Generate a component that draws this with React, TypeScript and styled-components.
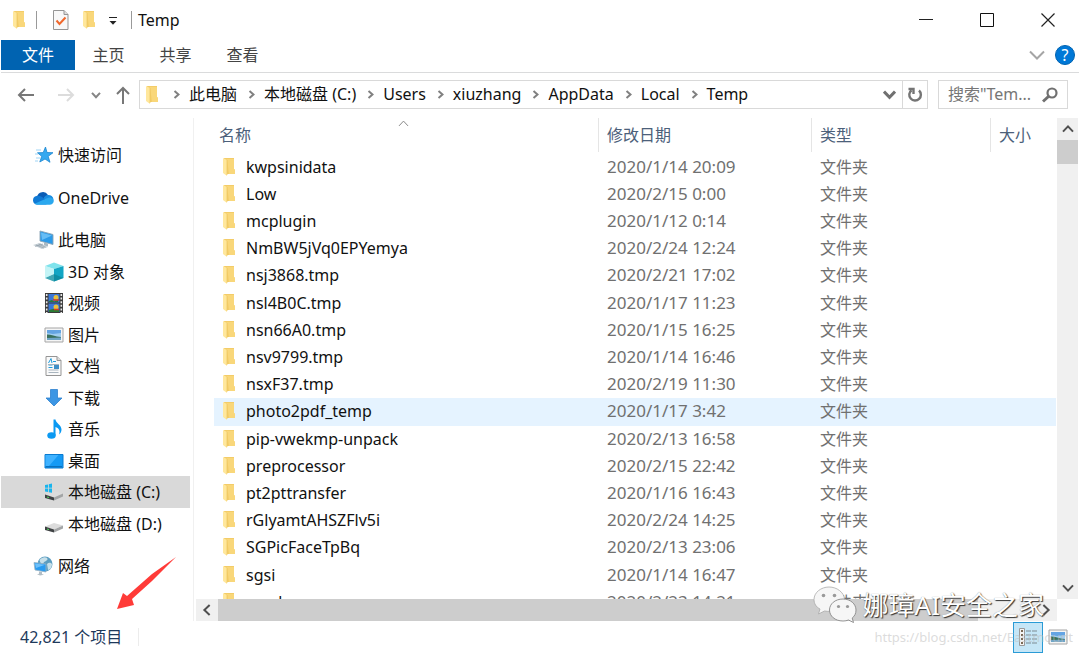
import React from "react";
import styled, { createGlobalStyle, css } from "styled-components";

const Global = createGlobalStyle`
  *, *::before, *::after { box-sizing: border-box; }
  body {
    margin: 0;
    background: #fff;
    color: #111;
    font: 16px/24px "Noto Sans", "Noto Sans CJK SC", sans-serif;
  }
  button, input { font: inherit; color: inherit; margin: 0; }
  button { border: 0; padding: 0; background: none; cursor: default; }
  a { color: inherit; text-decoration: none; }
  ul, ol { list-style: none; margin: 0; padding: 0; }
  svg { display: block; flex: none; }
  h1 { margin: 0; font-size: 16px; font-weight: 400; }
`;

const Window = styled.div`
  position: relative;
  display: flex;
  flex-direction: column;
  height: 100vh;
  padding: 0 1px;
  overflow: hidden;
`;

/* Title bar */
const TitleBar = styled.header`
  display: flex;
  align-items: center;
  height: 40px;
  flex: none;
  padding-left: 11px;
`;
const Divider = styled.span<{ $left: number; $right: number }>`
  width: 1px;
  height: 18px;
  margin: 0 ${(p) => p.$right}px 0 ${(p) => p.$left}px;
  background: #9a9a9a;
`;
const QuickTools = styled.div`
  display: flex;
  align-items: center;
  gap: 12px;
`;
const Caption = styled.div`
  display: flex;
  margin-left: auto;
  padding-right: 1px;
`;
const CaptionButton = styled.button`
  display: grid;
  place-items: center;
  width: 61px;
  height: 40px;
`;

/* Ribbon */
const Ribbon = styled.nav`
  display: flex;
  align-items: center;
  height: 33px;
  flex: none;
  padding-bottom: 2px;
  border-bottom: 1px solid #dadbdc;
`;
const Tab = styled.button<{ $primary?: boolean }>`
  width: 67px;
  height: 30px;
  color: #444;
  ${(p) =>
    p.$primary &&
    css`
      width: 74px;
      background: #0063b1;
      color: #fff;
    `}
`;
const RibbonEnd = styled.div`
  display: flex;
  align-items: center;
  gap: 10px;
  margin-left: auto;
  padding-right: 4px;
`;
const HelpButton = styled.button`
  width: 20px;
  height: 20px;
  border-radius: 50%;
  background: #0078d7;
  border: 1px solid #0063b1;
  color: #fff;
  font-size: 16px;
  line-height: 18px;
`;

/* Address row */
const AddressRow = styled.div`
  display: flex;
  align-items: center;
  height: 45px;
  flex: none;
  padding: 0 11px 2px 16px;
`;
const NavButtons = styled.div`
  display: flex;
  align-items: center;
  width: 122px;
  flex: none;
`;
const NavButton = styled.button<{ $width: number }>`
  display: flex;
  width: ${(p) => p.$width}px;
`;
const AddressBox = styled.div`
  display: flex;
  align-items: center;
  flex: 1;
  min-width: 0;
  height: 29px;
  border: 1px solid #d9d9d9;
  padding-left: 5px;
`;
const Crumbs = styled.ol`
  display: flex;
  flex: 1;
  min-width: 0;
  overflow: hidden;
  padding: 0 0 2px 3px;
`;
const Crumb = styled.li`
  display: flex;
  align-items: center;
  white-space: nowrap;
  flex: none;
  svg { margin: 2px 8px 0 10px; }
`;
const BoxButton = styled.button<{ $divided?: boolean }>`
  display: grid;
  place-items: center;
  width: 25px;
  height: 27px;
  border-left: ${(p) => (p.$divided ? "1px solid #d9d9d9" : "0")};
`;
const SearchBox = styled.label`
  display: flex;
  align-items: center;
  width: 130px;
  height: 29px;
  margin-left: 10px;
  padding: 0 9px;
  border: 1px solid #d9d9d9;
`;
const SearchInput = styled.input`
  flex: 1;
  width: 0;
  border: 0;
  padding: 0 0 2px;
  outline: 0;
  background: none;
  &::placeholder { color: #767676; opacity: 1; }
`;

/* Body */
const Body = styled.div`
  display: flex;
  flex: 1;
  min-height: 0;
`;
const Sidebar = styled.nav`
  width: 193px;
  flex: none;
  padding: 21px 3px 0 0;
  border-right: 1px solid #f0f0f0;
`;
const Place = styled.li<{ $group?: boolean; $selected?: boolean }>`
  height: 31px;
  background: ${(p) => (p.$selected ? "#d9d9d9" : "transparent")};
  &:nth-child(odd) { height: 32px; }
  &:not(:first-child) { margin-top: ${(p) => (p.$group ? "11px" : "0")}; }
  a {
    display: flex;
    align-items: center;
    height: 100%;
    gap: 4px;
    padding-left: ${(p) => (p.$group ? "31px" : "43px")};
  }
`;
const Pane = styled.main`
  display: flex;
  flex-direction: column;
  flex: 1;
  min-width: 0;
  padding: 0 1px 0 2px;
`;
const PaneTop = styled.div`
  display: flex;
  flex: 1;
  min-height: 0;
`;
const Listing = styled.div`
  flex: 1;
  min-width: 0;
  overflow: hidden;
  padding: 0 1px 0 18px;
`;
const Files = styled.table`
  width: 100%;
  table-layout: fixed;
  border-collapse: collapse;
`;
const Heading = styled.th<{ $width?: number; $first?: boolean }>`
  height: 36px;
  width: ${(p) => (p.$width ? p.$width + "px" : "auto")};
  padding: 0 0 2px ${(p) => (p.$first ? 5 : 9)}px;
  font-weight: 400;
  text-align: left;
  color: #4c607a;
  background: ${(p) =>
    p.$first ? "none" : "linear-gradient(#e5e5e5, #e5e5e5) 0 0 / 1px 34px no-repeat"};
`;
const HeadingInner = styled.span`
  display: flex;
  align-items: center;
  height: 34px;
`;
const SortMark = styled.span`
  align-self: flex-start;
  margin: 0 auto;
  padding-right: 42px;
`;
const FileRow = styled.tr<{ $hover?: boolean }>`
  height: 27px;
  background: ${(p) => (p.$hover ? "#e5f3ff" : "transparent")};
  &:nth-child(5n) { height: 28px; }
`;
const Cell = styled.td<{ $digits?: boolean }>`
  padding: 0 0 2px 9px;
  color: #707070;
  font-size: ${(p) => (p.$digits ? 17 : 16)}px;
  white-space: nowrap;
`;
const NameCell = styled(Cell)`
  padding-left: 8px;
  color: #111;
`;
const FileName = styled.span`
  display: flex;
  align-items: center;
  gap: 10px;
`;

/* Scroll bars */
const VBar = styled.div`
  display: flex;
  flex-direction: column;
  width: 21px;
  flex: none;
  background: #f0f0f0;
`;
const HBar = styled.div`
  display: flex;
  height: 22px;
  flex: none;
  margin-right: 21px;
  background: #f0f0f0;
`;
const ScrollButton = styled.button`
  display: grid;
  place-items: center;
  width: 22px;
  height: 22px;
  flex: none;
`;
const Track = styled.div<{ $vertical?: boolean }>`
  flex: 1;
  display: flex;
  flex-direction: ${(p) => (p.$vertical ? "column" : "row")};
`;
const Thumb = styled.div<{ $vertical?: boolean }>`
  background: #cdcdcd;
  ${(p) => (p.$vertical ? "height: 24px;" : "width: 93%;")}
`;

/* Status bar */
const StatusBar = styled.footer`
  display: flex;
  align-items: center;
  height: 32px;
  flex: none;
  padding: 0 6px 0 19px;
  color: #1e395b;
`;
const Count = styled.span`
  padding-right: 16px;
  border-right: 1px solid #ececec;
  line-height: 18px;
`;
const Views = styled.div`
  display: flex;
  align-items: center;
  margin-left: auto;
`;
const ViewButton = styled.button<{ $active?: boolean }>`
  display: grid;
  place-items: center;
  width: 30px;
  height: 31px;
  border: 1px solid ${(p) => (p.$active ? "#2a9bd6" : "transparent")};
  background: ${(p) => (p.$active ? "#c5e6f7" : "none")};
`;

/* Overlays */
const RedArrow = styled.svg`
  position: absolute;
  left: 116px;
  bottom: 42px;
`;
const Signature = styled.div`
  position: absolute;
  right: 36px;
  bottom: 28px;
  display: flex;
  align-items: center;
  gap: 6px;
  color: #fff;
  font-size: 26px;
  line-height: 40px;
  text-shadow: 1px 1px 1px #333, 0 0 1px #888;
  pointer-events: none;
`;
const Source = styled.div`
  position: absolute;
  right: 7px;
  bottom: 4px;
  color: rgba(190, 190, 190, 0.55);
  font-size: 13px;
  pointer-events: none;
`;

const Folder = () => (
  <svg width="14" height="20" viewBox="0 0 14 20">
    <path d="M2 1h10v11l1 1v4H3z" fill="#f3cc68" />
    <path d="M5 2h7v10l1 1v4H7z" fill="#f9d77a" />
    <path d="M1 1l4 2v16l-4-3z" fill="#ffe79c" />
    <path d="M5 3v15" stroke="#edc65f" strokeWidth=".7" />
  </svg>
);

const Chevron = ({
  dir,
  size = 10,
  color = "#707070",
  weight = 2,
}: {
  dir: "up" | "down" | "left" | "right";
  size?: number;
  color?: string;
  weight?: number;
}) => {
  const turn = { down: 0, left: 90, up: 180, right: 270 }[dir];
  return (
    <svg width={size} height={size} viewBox={`0 0 ${size} ${size}`}>
      <path
        d={`M1 ${size * 0.28}L${size / 2} ${size * 0.72}L${size - 1} ${size * 0.28}`}
        transform={`rotate(${turn} ${size / 2} ${size / 2})`}
        fill="none"
        stroke={color}
        strokeWidth={weight}
      />
    </svg>
  );
};

const Arrow = ({ d, color }: { d: string; color: string }) => (
  <svg width="18" height="18" viewBox="0 0 18 18" fill="none" stroke={color} strokeWidth="2">
    <path d={d} />
  </svg>
);

const Star = () => (
  <svg width="22" height="20" viewBox="0 0 22 20">
    <path d="M13.500 2l1.500 5.500 6 .2-4.800 3.600 1.800 6-5-3.300-5.200 3 1.900-5.700-4.200-3.500 5.700-.2z" fill="#35a9f0" stroke="#1c86d1" strokeWidth=".8" />
    <path d="M4 5h5M3 9h3M4 13h4M3 16h3" stroke="#9fd4f5" strokeWidth="1" />
  </svg>
);
const Cloud = () => (
  <svg width="22" height="20" viewBox="0 0 22 20">
    <path d="M5 9a6 6 0 0 1 11-2l-4 7z" fill="#0a5cb5" />
    <path d="M5 16.500a4.300 4.300 0 0 1-.5-8.500c3-.6 5 .6 8 3l2 5.500z" fill="#1079d4" />
    <path d="M16 7a5 5 0 0 1 5.500 4.500l-5 1-5-2c1-2.200 2.500-3.300 4.500-3.500z" fill="#1a8ce0" />
    <path d="M5 16.700h13a3.900 3.900 0 0 0 3.500-5.300c-1.500-1.800-4-2.400-6.500-1.200L2.500 15.700z" fill="#2ba8ee" />
  </svg>
);
const Computer = () => (
  <svg width="22" height="20" viewBox="0 0 22 20">
    <path d="M8 1l13 3.500v10L8 11z" fill="#2c9ae8" stroke="#8aa4b5" strokeWidth=".9" />
    <path d="M9 2.500l11 3-10 4.500z" fill="#67bdf5" />
    <path d="M12 12.500l4 1v3l-4-1z" fill="#a9b8c2" />
    <path d="M1 15l7-2 8 4-6 2z" fill="#c5cfd6" />
    <path d="M4 15l8 3M6.500 14l7 3.200M3 16.500l8-2.500" stroke="#8b99a3" strokeWidth=".6" />
  </svg>
);
const Cube = () => (
  <svg width="20" height="20" viewBox="0 0 20 20">
    <path d="M10 0.500l9.500 3.500-9.500 3L1 4z" fill="#7fe3ec" />
    <path d="M1 4l9 3v12.500L1 16z" fill="#a6edf2" />
    <path d="M10 7l9.500-3v12L10 19.500z" fill="#12a5c4" />
    <path d="M1 16l9-4 9.500 4-9.500 3.500z" fill="#0b8193" opacity=".65" />
    <path d="M1 4l9 3v5L1 16z" fill="#d1f7f8" opacity=".7" />
  </svg>
);
const Film = () => (
  <svg width="20" height="20" viewBox="0 0 20 20">
    <path d="M1 0h18v20H1z" fill="#3b3b3b" />
    <path d="M4.500 1h11v8.500h-11zM4.500 10.500h11V19h-11z" fill="#3a76d8" />
    <path d="M5 8l3-1 2 1.500 4-1.500v2H5zM5 17l4-1 6 1v2H5z" fill="#2a7b35" />
    <circle cx="12" cy="4.500" r="2.500" fill="#eac13a" />
    <circle cx="12" cy="14" r="2.500" fill="#eac13a" />
    <path d="M9 7h6M10 16.500h5" stroke="#d33a2c" strokeWidth="1.500" />
    <path d="M2.700 1v19M17.300 1v19" stroke="#e8e8e8" strokeWidth="1.600" strokeDasharray="2 1.600" />
  </svg>
);
const Picture = () => (
  <svg width="20" height="20" viewBox="0 0 20 20">
    <path d="M1 3h18v14H1z" fill="#f5f5f5" stroke="#a5a5a5" />
    <path d="M3 5h14v10H3z" fill="#9fcdf1" />
    <path d="M3 5h14v3l-8 1-6-1z" fill="#4b93dd" opacity=".7" />
    <path d="M3 9.500c4 0 8 2 14 2.500V15H3z" fill="#39705c" />
    <path d="M3 13l14-.5V15H3z" fill="#6fa5c7" />
  </svg>
);
const Doc = () => (
  <svg width="20" height="20" viewBox="0 0 20 20">
    <path d="M2 .5h11l4 4v15H2z" fill="#fafafa" stroke="#959595" />
    <path d="M13 .5v4h4" fill="#ddd" stroke="#959595" />
    <path d="M4.500 7l2.500-4.500L8 7M9 5.500h3M4.500 9h4M4.500 11.500h4" stroke="#1f9bdc" fill="none" />
    <path d="M4.500 14h10M4.500 16.500h10M4 8.500h11" stroke="#a9b5bf" />
    <path d="M10 9h5v4h-5z" fill="#3f8fc7" />
  </svg>
);
const Download = () => (
  <svg width="20" height="20" viewBox="0 0 20 20">
    <path d="M6.500 1.500h7V10h4.500l-8 8-8-8h4.500z" fill="#3c96e4" stroke="#2d82cf" strokeWidth=".8" />
  </svg>
);
const Music = () => (
  <svg width="20" height="20" viewBox="0 0 20 20">
    <ellipse cx="7.500" cy="16.500" rx="4.200" ry="3.200" fill="#0a99f2" />
    <path d="M9.500 0.500h2c.3 3.500 6 5.500 6 10 0 2-1 4-2.500 5 1.500-4-.3-6.500-3.500-7.500v8.500h-2z" fill="#0a99f2" />
  </svg>
);
const Desktop = () => (
  <svg width="20" height="20" viewBox="0 0 20 20">
    <path d="M1 3.500h18v13.500H1z" fill="#159af5" stroke="#0a7bd0" />
    <path d="M1.500 4h13L5 15H1.500z" fill="#3fb2ff" />
    <path d="M2 15.700h16" stroke="#0868b0" />
  </svg>
);
const Disk = ({ system }: { system?: boolean }) => (
  <svg width="20" height="20" viewBox="0 0 20 20">
    <path d="M1 12.500L10 9l9 2.500-9 4z" fill="#dcdcdc" />
    <path d="M1 12.500l9 3V18.500l-9-2.500z" fill="#3f4244" />
    <path d="M10 15.500l9-4v3l-9 4z" fill="#a3a5a6" />
    <path d="M3 15l2 .6" stroke="#4fd25c" strokeWidth="1" />
    {system && (
      <path d="M1 3l3-.6v3.400H1zM4.800 2.200L8 1.600v4.200H4.800zM1 6.600h3V10l-3-.5zM4.800 6.600H8v4.100l-3.200-.5z" fill="#19b5ee" />
    )}
  </svg>
);
const Network = () => (
  <svg width="22" height="20" viewBox="0 0 22 20">
    <circle cx="13" cy="8" r="7.500" fill="#5b9dc0" />
    <path d="M7.500 4c3-4 8-3 8-1s-3 2-4 4-3 1-4-3zM15 8c2-2 4-1 5 0 0 3-2 6-4 6z" fill="#c6dfe9" />
    <path d="M2 6.500l12 1.500v8L3 14z" fill="#299bf0" stroke="#9cb2c0" strokeWidth=".8" />
    <path d="M3 7.500l10 1.300-9 3.200z" fill="#6cc0fa" />
    <path d="M7 15.500l3 .5v2l2 .8-4 .7-3-1.200 2-.6z" fill="#b2bec6" />
  </svg>
);

const places: { label: string; icon: React.ReactNode; group?: boolean; selected?: boolean }[] = [
  { label: "快速访问", icon: <Star />, group: true },
  { label: "OneDrive", icon: <Cloud />, group: true },
  { label: "此电脑", icon: <Computer />, group: true },
  { label: "3D 对象", icon: <Cube /> },
  { label: "视频", icon: <Film /> },
  { label: "图片", icon: <Picture /> },
  { label: "文档", icon: <Doc /> },
  { label: "下载", icon: <Download /> },
  { label: "音乐", icon: <Music /> },
  { label: "桌面", icon: <Desktop /> },
  { label: "本地磁盘 (C:)", icon: <Disk system />, selected: true },
  { label: "本地磁盘 (D:)", icon: <Disk /> },
  { label: "网络", icon: <Network />, group: true },
];

const files = [
  ["kwpsinidata", "2020/1/14 20:09"],
  ["Low", "2020/2/15 0:00"],
  ["mcplugin", "2020/1/12 0:14"],
  ["NmBW5jVq0EPYemya", "2020/2/24 12:24"],
  ["nsj3868.tmp", "2020/2/21 17:02"],
  ["nsl4B0C.tmp", "2020/1/17 11:23"],
  ["nsn66A0.tmp", "2020/1/15 16:25"],
  ["nsv9799.tmp", "2020/1/14 16:46"],
  ["nsxF37.tmp", "2020/2/19 11:30"],
  ["photo2pdf_temp", "2020/1/17 3:42"],
  ["pip-vwekmp-unpack", "2020/2/13 16:58"],
  ["preprocessor", "2020/2/15 22:42"],
  ["pt2pttransfer", "2020/1/16 16:43"],
  ["rGlyamtAHSZFlv5i", "2020/2/24 14:25"],
  ["SGPicFaceTpBq", "2020/2/13 23:06"],
  ["sgsi", "2020/1/14 16:47"],
  ["send", "2020/2/23 14:21"],
];

const crumbs = ["此电脑", "本地磁盘 (C:)", "Users", "xiuzhang", "AppData", "Local", "Temp"];

export default function App() {
  return (
    <Window>
      <Global />
      <TitleBar>
        <Folder />
        <Divider $left={10} $right={15} />
        <QuickTools>
          <svg width="18" height="20" viewBox="0 0 18 20">
            <path d="M1.500.5h10.500l4 4v15h-14.500z" fill="#f8f8f8" stroke="#959595" />
            <path d="M12 .5v4h4" fill="#ddd" stroke="#959595" />
            <path d="M4.500 10.500l3 3.500 6-6.500" fill="none" stroke="#f0682c" strokeWidth="2" />
          </svg>
          <Folder />
          <svg width="10" height="10" viewBox="0 0 10 10">
            <path d="M1 2.500h8" stroke="#222" />
            <path d="M1.500 6h7L5 9.800z" fill="#222" />
          </svg>
        </QuickTools>
        <Divider $left={13} $right={6} />
        <h1>Temp</h1>
        <Caption>
          <CaptionButton aria-label="最小化">
            <svg width="14" height="14" viewBox="0 0 14 14">
              <path d="M0 6.500h14" stroke="#222" />
            </svg>
          </CaptionButton>
          <CaptionButton aria-label="最大化">
            <svg width="14" height="14" viewBox="0 0 14 14">
              <path d="M.5.5h13v13H.5z" fill="none" stroke="#111" />
            </svg>
          </CaptionButton>
          <CaptionButton aria-label="关闭">
            <svg width="14" height="14" viewBox="0 0 14 14">
              <path d="M.5.5l13 13M13.500.5l-13 13" stroke="#222" strokeWidth="1.200" />
            </svg>
          </CaptionButton>
        </Caption>
      </TitleBar>

      <Ribbon>
        <Tab $primary>文件</Tab>
        <Tab>主页</Tab>
        <Tab>共享</Tab>
        <Tab>查看</Tab>
        <RibbonEnd>
          <Chevron dir="down" size={16} color="#a5a5a5" weight={2} />
          <HelpButton aria-label="帮助">?</HelpButton>
        </RibbonEnd>
      </Ribbon>

      <AddressRow>
        <NavButtons>
          <NavButton $width={40} aria-label="后退">
            <Arrow d="M17 9H2M8 3L2 9l6 6" color="#777" />
          </NavButton>
          <NavButton $width={34} aria-label="前进">
            <Arrow d="M1 9h15M10 3l6 6-6 6" color="#dcdcdc" />
          </NavButton>
          <NavButton $width={23} aria-label="最近位置">
            <Chevron dir="down" size={10} color="#858585" />
          </NavButton>
          <NavButton $width={25} aria-label="向上">
            <Arrow d="M9 18V2M3 8l6-6 6 6" color="#777" />
          </NavButton>
        </NavButtons>
        <AddressBox>
          <Folder />
          <Crumbs>
            {crumbs.map((c) => (
              <Crumb key={c}>
                <Chevron dir="right" size={9} color="#808080" weight={2} />
                <button>{c}</button>
              </Crumb>
            ))}
          </Crumbs>
          <BoxButton aria-label="以前的位置">
            <Chevron dir="down" size={13} weight={3} />
          </BoxButton>
          <BoxButton $divided aria-label="刷新">
            <svg width="16" height="16" viewBox="0 0 16 16" fill="none" stroke="#757575" strokeWidth="2.400">
              <path d="M12 3.500A5.800 5.800 0 1 1 4.500 3.200" />
              <path d="M1.500 2h5v5" />
            </svg>
          </BoxButton>
        </AddressBox>
        <SearchBox>
          <SearchInput aria-label="搜索" placeholder={'搜索"Tem...'} />
          <svg width="16" height="16" viewBox="0 0 16 16" fill="none" stroke="#707070">
            <circle cx="10" cy="6" r="4.500" strokeWidth="2.200" />
            <path d="M7 9l-6 5.500" strokeWidth="3" />
          </svg>
        </SearchBox>
      </AddressRow>

      <Body>
        <Sidebar aria-label="导航窗格">
          <ul>
            {places.map((p) => (
              <Place key={p.label} $group={p.group} $selected={p.selected}>
                <a href="#">
                  {p.icon}
                  {p.label}
                </a>
              </Place>
            ))}
          </ul>
        </Sidebar>
        <Pane>
          <PaneTop>
            <Listing>
              <Files>
                <thead>
                  <tr>
                    <Heading $first>
                      <HeadingInner>
                        名称
                        <SortMark>
                          <Chevron dir="up" size={11} color="#888" weight={1} />
                        </SortMark>
                      </HeadingInner>
                    </Heading>
                    <Heading $width={213}>修改日期</Heading>
                    <Heading $width={179}>类型</Heading>
                    <Heading $width={66}>大小</Heading>
                  </tr>
                </thead>
                <tbody>
                  {files.map(([name, date]) => (
                    <FileRow key={name} $hover={name === "photo2pdf_temp"}>
                      <NameCell>
                        <FileName>
                          <Folder />
                          {name}
                        </FileName>
                      </NameCell>
                      <Cell $digits>{date}</Cell>
                      <Cell>文件夹</Cell>
                      <Cell />
                    </FileRow>
                  ))}
                </tbody>
              </Files>
            </Listing>
            <VBar>
              <ScrollButton aria-label="向上滚动">
                <Chevron dir="up" size={12} color="#505050" weight={2} />
              </ScrollButton>
              <Track $vertical>
                <Thumb $vertical />
              </Track>
              <ScrollButton aria-label="向下滚动">
                <Chevron dir="down" size={12} color="#505050" weight={2} />
              </ScrollButton>
            </VBar>
          </PaneTop>
          <HBar>
            <ScrollButton aria-label="向左滚动">
              <Chevron dir="left" size={12} color="#505050" weight={2} />
            </ScrollButton>
            <Track>
              <Thumb />
            </Track>
            <ScrollButton aria-label="向右滚动">
              <Chevron dir="right" size={12} color="#505050" weight={2} />
            </ScrollButton>
          </HBar>
        </Pane>
      </Body>

      <StatusBar>
        <Count>42,821 个项目</Count>
        <Views>
          <ViewButton $active aria-label="详细信息">
            <svg width="20" height="20" viewBox="0 0 20 20">
              <path d="M1.500 1.500h5v17h-5z" fill="#f4f4f4" stroke="#9a9a9a" />
              <path d="M4 3v15" stroke="#7b6a55" strokeWidth="2" strokeDasharray="2 2" />
              <path d="M8 4h5M14 4h5M8 8h5M14 8h5M8 12h5M14 12h5M8 16h5M14 16h5" stroke="#7d8b93" />
            </svg>
          </ViewButton>
          <ViewButton aria-label="大缩略图">
            <Picture />
          </ViewButton>
        </Views>
      </StatusBar>

      <RedArrow width="62" height="54" viewBox="0 0 62 54" aria-hidden="true">
        <path d="M60 0L36 24 16 42l2 6L1 52l6-16 4 3L36 17z" fill="#ff3b38" />
      </RedArrow>
      <Source>https://blog.csdn.net/Eastmount</Source>
      <Signature>
        <svg width="44" height="38" viewBox="0 0 44 38">
          <path d="M16 1C8 1 1 6.500 1 13.500c0 4 2 7.500 6 9.500l-1.500 5 6-3c8 1.500 20-1 20-12C31 6.500 24 1 16 1z" fill="#f6f6f6" stroke="#aaa" strokeWidth=".8" />
          <path d="M30 13c-8 0-13.500 5-13.500 11S22 35 30 35c2 0 4-.3 5.500-1l5 2.500-1.300-4.500c2.500-2 3.800-4.500 3.800-8 0-6-5.500-11-13-11z" fill="#f6f6f6" stroke="#888" strokeWidth=".9" />
          <g fill="#999">
            <circle cx="10.500" cy="9.500" r="1.800" />
            <circle cx="21.500" cy="9.500" r="1.800" />
            <circle cx="25.500" cy="20.500" r="1.600" />
            <circle cx="34.500" cy="20.500" r="1.600" />
          </g>
        </svg>
        娜璋AI安全之家
      </Signature>
    </Window>
  );
}
